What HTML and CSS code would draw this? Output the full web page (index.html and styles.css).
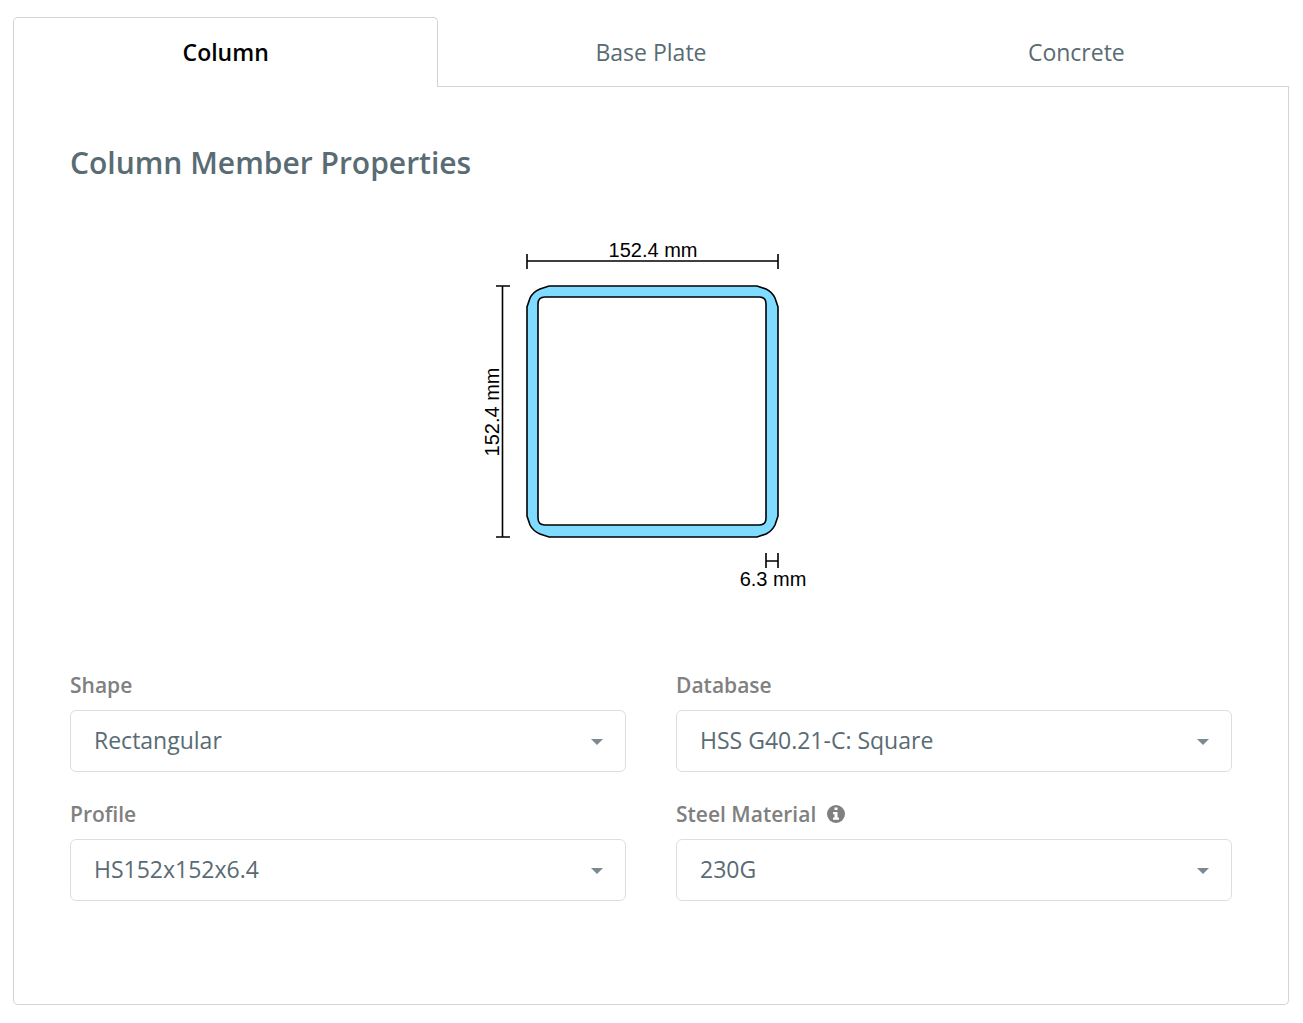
FILE: index.html
```html
<!DOCTYPE html>
<html lang="en">
<head>
  <meta charset="UTF-8" />
  <meta name="viewport" content="width=device-width, initial-scale=1.0"/>
  <title>Column Member Properties</title>
  <link rel="stylesheet" href="styles.css">
</head>
<body>
  <div class="tabs" role="tablist">
    <button class="tab active" role="tab" aria-selected="true">Column</button>
    <button class="tab" role="tab" aria-selected="false">Base Plate</button>
    <button class="tab" role="tab" aria-selected="false">Concrete</button>
  </div>

  <div class="panel" role="tabpanel">
    <h2 class="title">Column Member Properties</h2>

    <svg class="section" viewBox="0 0 360 380" width="360" height="380">
      <!-- hollow section -->
      <path class="steel" fill-rule="evenodd" d="M78 56H286L295 59Q301 62 304 68L307 77V286L304 295Q301 301 295 304L286 307H78L69 304Q62 301 59 295L56 286V77L59 68Q62 62 69 59Z
        M74 67Q67 67 67 74V288Q67 295 74 295H288Q295 295 295 288V74Q295 67 288 67Z"/>
      <!-- dimension lines -->
      <path class="dim" d="M56 31H307M56 24V39M307 24V39"/>
      <path class="dim" d="M31.500 56V307M25 56H39M25 307H39"/>
      <path class="dim" d="M295 331H307M295 323V338M307 323V338"/>
      <text x="182" y="27">152.4 mm</text>
      <text transform="translate(28 182) rotate(-90)">152.4 mm</text>
      <text x="302" y="356">6.3 mm</text>
    </svg>

    <form class="fields">
      <div class="field">
        <label for="shape">Shape</label>
        <div class="selectBox">
          <select id="shape"><option>Rectangular</option></select>
        </div>
      </div>
      <div class="field">
        <label for="database">Database</label>
        <div class="selectBox">
          <select id="database"><option>HSS G40.21-C: Square</option></select>
        </div>
      </div>
      <div class="field">
        <label for="profile">Profile</label>
        <div class="selectBox">
          <select id="profile"><option>HS152x152x6.4</option></select>
        </div>
      </div>
      <div class="field">
        <label for="material">Steel Material
          <svg class="info" viewBox="0 0 18 18" width="18" height="18">
            <circle cx="9" cy="9" r="9"/>
            <path d="M7.500 2.500h3v2.600h-3zM6 7h4.500v5.500H12v2.200H6v-2.200h1.500V9.200H6z"/>
          </svg>
        </label>
        <div class="selectBox">
          <select id="material"><option>230G</option></select>
        </div>
      </div>
    </form>
  </div>
</body>
</html>
```
FILE: styles.css
```css
* {
  margin: 0;
  padding: 0;
  box-sizing: border-box;
  font-family: "Open Sans", sans-serif;
}

body {
  padding: 17px 14px 18px 13px;
  background: #fff;
  color: #596b73;
}

.tabs {
  display: grid;
  grid-template-columns: repeat(3, 1fr);
}

.tab {
  height: 70px;
  padding-top: 1px;
  border: none;
  border-bottom: 1px solid #d4d4d5;
  background: #fff;
  color: #596b73;
  font-size: 23px;
  cursor: pointer;
}

.tab.active {
  padding: 0 0 1px;
  border: 1px solid #d4d4d5;
  border-bottom: none;
  border-radius: 5px 5px 0 0;
  color: #000;
  font-weight: 600;
}

.panel {
  padding: 52px 56px 103px;
  border: 1px solid #d4d4d5;
  border-top: none;
  border-radius: 0 0 5px 5px;
}

.title {
  margin-bottom: 43px;
  font-size: 30px;
  font-weight: 600;
  line-height: 48px;
}

.section {
  display: block;
  margin: 0 auto 61px;
}

.section text {
  font-family: "Liberation Sans", Arial, sans-serif;
  font-size: 20px;
  text-anchor: middle;
  fill: #000;
}

.steel {
  fill: #7fdbff;
  stroke: #000;
  stroke-width: 1.6;
}

.dim {
  fill: none;
  stroke: #000;
  stroke-width: 1.6;
}

.fields {
  display: grid;
  grid-template-columns: 1fr 1fr;
  gap: 28px 50px;
}

.field label {
  display: flex;
  align-items: center;
  gap: 11px;
  margin-bottom: 11px;
  color: #808080;
  font-size: 21px;
  font-weight: 600;
  line-height: 28px;
}

.info circle {
  fill: #808080;
}

.info path {
  fill: #fff;
}

.selectBox {
  position: relative;
}

.selectBox::after {
  content: "";
  position: absolute;
  top: 29px;
  right: 23px;
  border: 6px solid transparent;
  border-top-color: #7b8a91;
  border-bottom: none;
  pointer-events: none;
}

.selectBox select {
  display: block;
  width: 100%;
  height: 62px;
  padding: 0 50px 2px 23px;
  border: 1px solid #dededf;
  border-radius: 6px;
  background: #fff;
  color: #596b73;
  font-size: 23px;
  appearance: none;
}
```
